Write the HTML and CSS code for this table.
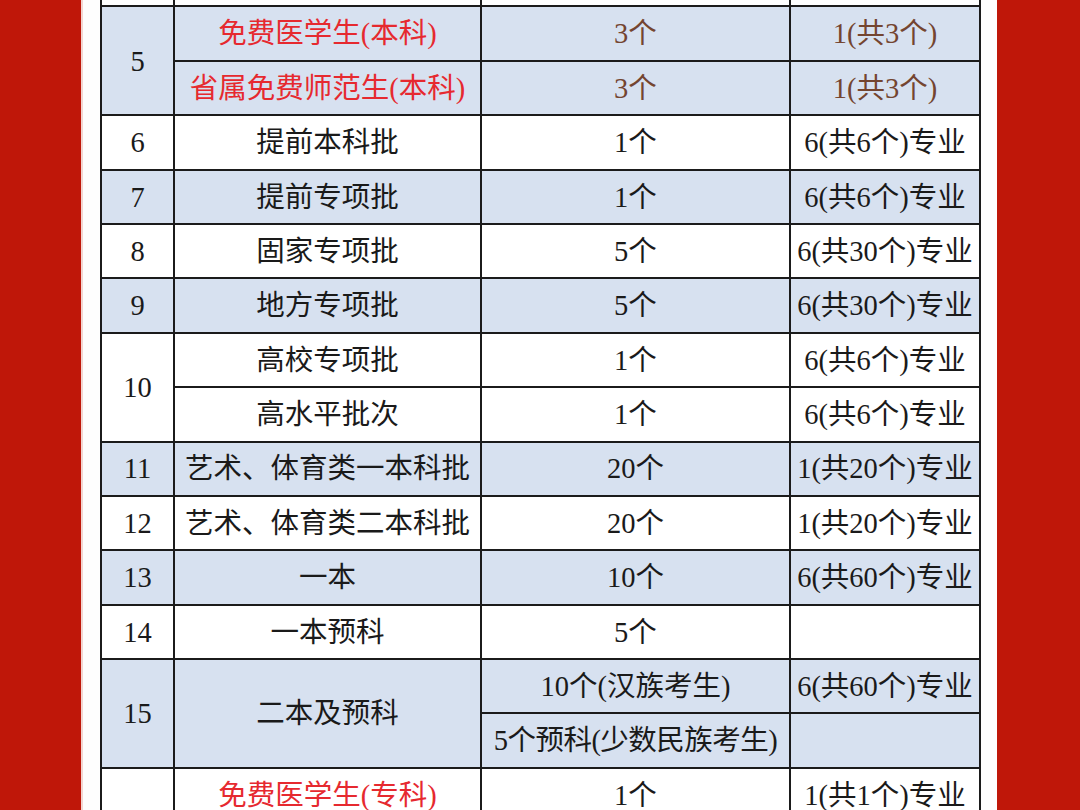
FILE: index.html
```html
<!DOCTYPE html>
<html lang="zh-CN">
<head>
<meta charset="utf-8">
<title>志愿填报批次表</title>
<link rel="stylesheet" href="styles.css">
</head>
<body>
<div class="page">
  <div class="side side-left"></div>
  <div class="paper">
    <table class="grid">
      <colgroup>
        <col class="c-no"><col class="c-batch"><col class="c-count"><col class="c-major">
      </colgroup>
      <tbody>
        <tr class="white"><td></td><td></td><td></td><td></td></tr>
        <tr class="blue">
          <td rowspan="2">5</td>
          <td class="red">免费医学生(本科)</td>
          <td class="brown">3个</td>
          <td class="brown">1(共3个)</td>
        </tr>
        <tr class="blue">
          <td class="red">省属免费师范生(本科)</td>
          <td class="brown">3个</td>
          <td class="brown">1(共3个)</td>
        </tr>
        <tr class="white"><td>6</td><td>提前本科批</td><td>1个</td><td>6(共6个)专业</td></tr>
        <tr class="blue"><td>7</td><td>提前专项批</td><td>1个</td><td>6(共6个)专业</td></tr>
        <tr class="white"><td>8</td><td>固家专项批</td><td>5个</td><td>6(共30个)专业</td></tr>
        <tr class="blue"><td>9</td><td>地方专项批</td><td>5个</td><td>6(共30个)专业</td></tr>
        <tr class="white"><td rowspan="2">10</td><td>高校专项批</td><td>1个</td><td>6(共6个)专业</td></tr>
        <tr class="white"><td>高水平批次</td><td>1个</td><td>6(共6个)专业</td></tr>
        <tr class="blue"><td>11</td><td>艺术、体育类一本科批</td><td>20个</td><td>1(共20个)专业</td></tr>
        <tr class="white"><td>12</td><td>艺术、体育类二本科批</td><td>20个</td><td>1(共20个)专业</td></tr>
        <tr class="blue"><td>13</td><td>一本</td><td>10个</td><td>6(共60个)专业</td></tr>
        <tr class="white"><td>14</td><td>一本预科</td><td>5个</td><td></td></tr>
        <tr class="blue"><td rowspan="2">15</td><td rowspan="2">二本及预科</td><td>10个(汉族考生)</td><td>6(共60个)专业</td></tr>
        <tr class="blue"><td class="tight">5个预科(少数民族考生)</td><td></td></tr>
        <tr class="white"><td></td><td class="red">免费医学生(专科)</td><td>1个</td><td>1(共1个)专业</td></tr>
      </tbody>
    </table>
  </div>
  <div class="side side-right"></div>
</div>
</body>
</html>
```

FILE: styles.css
```css
* { box-sizing: border-box; }
html, body { margin: 0; padding: 0; }
body {
  width: 1080px;
  height: 810px;
  overflow: hidden;
  background: #bf1609;
}
.page {
  display: flex;
  width: 1080px;
  height: 810px;
  overflow: hidden;
}
.side {
  flex: none;
  background: #bf1709;
}
.side-left { width: 83px; border-right: 2px solid #f3d6d2; }
.side-right { width: 83px; }
.paper {
  flex: 1;
  background: #fefefe;
  overflow: hidden;
  padding-left: 17px;
}
.grid {
  border-collapse: collapse;
  table-layout: fixed;
  width: 879px;
  margin-top: -49px;
  font-family: "Liberation Serif", "Noto Sans CJK SC", serif;
  font-size: 28.5px;
  color: #1a1a1a;
}
.c-no { width: 73px; }
.c-batch { width: 307px; }
.c-count { width: 309px; }
.c-major { width: 190px; }
.grid td {
  border: 2px solid #1b1b1b;
  height: 54.4px;
  padding: 2px 0 0;
  text-align: center;
  vertical-align: middle;
  white-space: nowrap;
  line-height: 1;
  overflow: visible;
}
.grid tr.blue td { background: #d7e1f0; }
.grid tr.white td { background: #ffffff; }
.grid td.red { color: #e6292f; }
.grid td.brown { color: #744530; }
.grid td.tight { letter-spacing: -0.5px; }
```
